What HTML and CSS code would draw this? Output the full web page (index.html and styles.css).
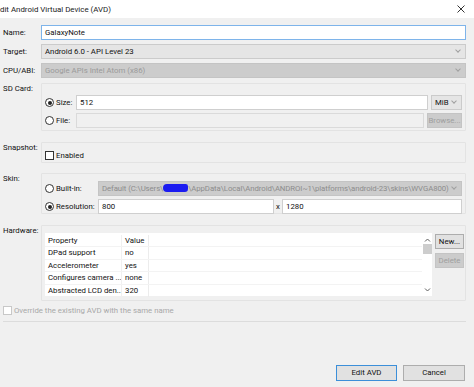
FILE: index.html
```html
<!DOCTYPE html>
<html>
<head>
<meta charset="utf-8">
<link rel="stylesheet" href="styles.css">
</head>
<body>
<div class="win">
  <div class="titlebar">
    <span class="title">dit Android Virtual Device (AVD)</span>
    <svg class="close" width="8" height="8" viewBox="0 0 8 8"><path d="M0.5 0.5 L7.5 7.5 M7.5 0.5 L0.5 7.5" stroke="#333" stroke-width="1"/></svg>
  </div>
  <div class="form">
    <div class="lbl mid">Name:</div>
    <div class="row"><div class="field focus">GalaxyNote</div></div>

    <div class="lbl mid">Target:</div>
    <div class="row"><div class="field combo">Android 6.0 - API Level 23<span class="chev"></span></div></div>

    <div class="lbl mid">CPU/ABI:</div>
    <div class="row"><div class="field combo dis">Google APIs Intel Atom (x86)<span class="chev"></span></div></div>

    <div class="lbl top">SD Card:</div>
    <div class="group g-sd">
      <div class="grow">
        <span class="radio on"></span><span class="rlab w-size">Size:</span>
        <div class="field plain flex1">512</div>
        <div class="field combo mib">MiB<span class="chev"></span></div>
      </div>
      <div class="grow">
        <span class="radio"></span><span class="rlab w-size">File:</span>
        <div class="field plain empty flex1"></div>
        <div class="btn dis browse">Browse...</div>
      </div>
    </div>

    <div class="lbl top">Snapshot:</div>
    <div class="group g-snap">
      <div class="grow"><span class="check"></span><span class="rlab">Enabled</span></div>
    </div>

    <div class="lbl top">Skin:</div>
    <div class="group g-skin">
      <div class="grow">
        <span class="radio"></span><span class="rlab w-res">Built-in:</span>
        <div class="field combo dis2 flex1">Default (C:\Users\<span class="blot"></span>\AppData\Local\Android\ANDROI~1\platforms\android-23\skins\WVGA800)<span class="chev"></span></div>
      </div>
      <div class="grow">
        <span class="radio on"></span><span class="rlab w-res">Resolution:</span>
        <div class="field plain res1">800</div>
        <span class="xsep">x</span>
        <div class="field plain flex1">1280</div>
      </div>
    </div>

    <div class="lbl top">Hardware:</div>
    <div class="group g-hw">
      <div class="hwrow">
        <div class="table">
          <div class="tbody">
            <div class="tr"><span class="c1">Property</span><span class="c2">Value</span><span class="c3"></span></div>
            <div class="tr"><span class="c1">DPad support</span><span class="c2">no</span><span class="c3"></span></div>
            <div class="tr"><span class="c1">Accelerometer</span><span class="c2">yes</span><span class="c3"></span></div>
            <div class="tr"><span class="c1">Configures camera ...</span><span class="c2">none</span><span class="c3"></span></div>
            <div class="tr"><span class="c1">Abstracted LCD den...</span><span class="c2">320</span><span class="c3"></span></div>
          </div>
          <div class="sbar">
            <svg class="arr" width="9" height="6" viewBox="0 0 9 6"><path d="M2 4.5 L4.5 2 L7 4.5" fill="none" stroke="#606060" stroke-width="1"/></svg>
            <div class="thumb"></div>
            <div class="sfill"></div>
            <svg class="arr" width="9" height="6" viewBox="0 0 9 6"><path d="M2 1.5 L4.5 4 L7 1.5" fill="none" stroke="#606060" stroke-width="1"/></svg>
          </div>
        </div>
        <div class="hwbtns">
          <div class="btn">New...</div>
          <div class="btn dis">Delete</div>
        </div>
      </div>
    </div>
  </div>
  <div class="override"><span class="check dis"></span><span>Override the existing AVD with the same name</span></div>
  <div class="sep"></div>
  <div class="footer">
    <div class="btn big default">Edit AVD</div>
    <div class="btn big">Cancel</div>
  </div>
</div>
</body>
</html>
```
FILE: styles.css
```css
* { box-sizing: border-box; }
html, body { margin: 0; padding: 0; }
body {
  width: 474px; height: 387px; overflow: hidden;
  background: #f0f0f0;
  font-family: Roboto, "Open Sans", sans-serif;
  font-size: 7.8px;
  color: #111;
}
.win { width: 474px; height: 387px; position: relative; }
.titlebar {
  height: 18px; background: #fff;
  display: flex; align-items: center; justify-content: space-between;
  padding: 0 9px 0 0;
}
.title { font-size: 7.9px; color: #222; }
.close { display: block; }

.form {
  display: grid;
  grid-template-columns: 38px 425px;
  padding: 7px 0 0 3px;
}
.lbl { white-space: nowrap; line-height: 12px; }
.lbl.mid { height: 15px; line-height: 15px; }
.row { height: 15px; margin-bottom: 4px; display: flex; }
.row:nth-child(6) { margin-bottom: 5px; }
.field {
  height: 15px; line-height: 13px;
  border: 1px solid #c3c3c3; background: #fff;
  padding: 0 3px; white-space: nowrap; overflow: hidden;
  position: relative; flex: 1;
}
.field.focus { border-color: #7eb4ea; }
.field.combo { background: #e5e5e5; border-color: #cbcbcb; padding-right: 14px; }
.field.combo.dis { background: #cccccc; border-color: #c4c4c4; color: #9a9a9a; }
.field.combo.dis2 { background: #cccccc; border-color: #c4c4c4; color: #8c8c8c; letter-spacing: -0.09px; }
.field.plain { border-color: #cfcfcf; }
.field.empty { background: #f0f0f0; border-color: #dadada; }
.chev {
  position: absolute; right: 5px; top: 3px;
  width: 4px; height: 4px;
  border-right: 1px solid #a0a0a0; border-bottom: 1px solid #a0a0a0;
  transform: rotate(45deg);
}
.flex1 { flex: 1; }

.group {
  border: 1px solid #e3e3e3;
  border-radius: 1px;
  margin-bottom: 11px;
}
.g-sd { height: 48px; padding: 11px 0 0 3px; }
.g-snap { height: 21px; padding: 5px 0 0 3px; margin-bottom: 10px; }
.g-skin { height: 41px; padding: 7px 0 0 3px; }
.g-hw { height: 76px; padding: 7px 0 0 3px; margin-bottom: 0; }

.grow { display: flex; align-items: center; height: 15px; margin-bottom: 3px; padding-right: 3px; }
.radio {
  width: 9px; height: 9px; border-radius: 50%;
  border: 1px solid #333; background: #fff; flex: none; position: relative;
}
.radio.on::after {
  content: ""; position: absolute; left: 1.5px; top: 1.5px;
  width: 4px; height: 4px; border-radius: 50%; background: #222;
}
.check { width: 9px; height: 9px; border: 1px solid #333; background: #fff; flex: none; }
.check.dis { border-color: #c8c8c8; }
.rlab { margin-left: 2px; white-space: nowrap; }
.w-size { width: 20px; }
.w-res { width: 42px; }
.mib { flex: none; width: 31px; margin-left: 3px; }
.browse { flex: none; width: 35px; margin-left: 3px; height: 15px; }
.res1 { flex: none; width: 176px; }
.xsep { width: 8px; text-align: center; }
.blot {
  display: inline-block; width: 25px; height: 8px; vertical-align: -1px;
  background: #1b1bf0; border-radius: 5px 3px 4px 5px;
}

.btn {
  border: 1px solid #adadad; background: #e1e1e1;
  text-align: center; line-height: 13px; height: 15px;
  white-space: nowrap;
}
.btn.dis { background: #cccccc; border-color: #c4c4c4; color: #9e9e9e; }

.hwrow { display: flex; }
.table { width: 387px; height: 63px; background: #fff; display: flex; }
.tbody { flex: 1; padding-top: 2px; }
.tr { display: flex; height: 12.4px; line-height: 12px; border-bottom: 1px solid #f3f3f3; }
.tr:last-child { border-bottom: none; }
.c1 { width: 77px; padding-left: 3px; white-space: nowrap; overflow: hidden; border-right: 1px solid #f0f0f0; }
.c2 { width: 27px; padding-left: 3px; border-right: 1px solid #ececec; }
.c3 { flex: 1; }
.sbar { width: 10px; display: flex; flex-direction: column; align-items: center; padding: 4px 0 3px; }
.arr { flex: none; }
.thumb { width: 9px; height: 10px; background: #cdcdcd; margin-top: 1px; }
.sfill { flex: 1; }
.hwbtns { margin-left: 3px; display: flex; flex-direction: column; gap: 4px; width: 29px; padding-top: 1px; }

.override {
  display: flex; align-items: center; gap: 2px;
  padding: 3px 0 0 3px; height: 15px; color: #a8a8a8;
}
.sep { margin: 5px 8px 0 3px; border-top: 1px solid #dcdcdc; }
.footer {
  display: flex; justify-content: flex-end; gap: 6px;
  padding: 43px 9px 0 0;
}
.btn.big { width: 61px; height: 16px; line-height: 14px; }
.btn.big + .btn.big { width: 62px; }
.btn.default { border-color: #3c8fd9; }
```
